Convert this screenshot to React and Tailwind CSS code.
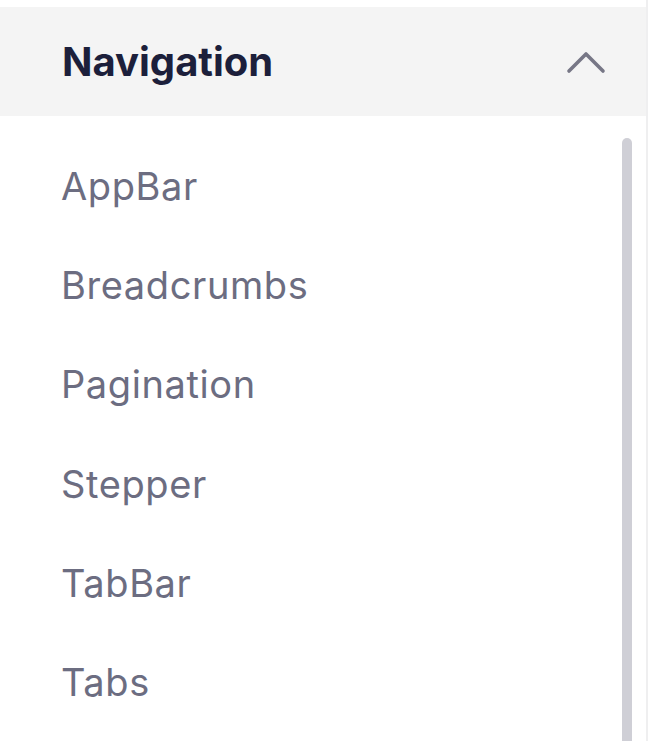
import { useState } from "react";

const items = ["AppBar", "Breadcrumbs", "Pagination", "Stepper", "TabBar", "Tabs"];

function Chevron() {
  return (
    <svg width="40" height="24" viewBox="0 0 40 24" fill="none">
      <path
        d="M3 21L20 4L37 21"
        stroke="#777786"
        strokeWidth="3.6"
        strokeLinecap="round"
        strokeLinejoin="round"
      />
    </svg>
  );
}

export default function App() {
  const [open] = useState(true);

  return (
    <div className="w-[656px] h-[741px] bg-white overflow-hidden font-['Inter',sans-serif]">
      <div className="w-[648px] h-full border-r-2 border-[#efeff0] pt-[7px]">
        <div className="h-[109px] bg-[#f4f4f4] flex items-center justify-between pl-[62px] pr-[40px]">
          <span className="text-[40px] font-bold text-[#1c1f3b]">Navigation</span>
          <Chevron />
        </div>
        {open && (
          <div className="relative pt-[21px]">
            <ul>
              {items.map((item) => (
                <li
                  key={item}
                  className="h-[99.2px] flex items-center pl-[61px] text-[38px] tracking-[0.6px] text-[#6c6d81]"
                >
                  {item}
                </li>
              ))}
            </ul>
            <div className="absolute right-[14px] top-[22px] w-[10px] h-[700px] rounded-full bg-[#cfcfd6]" />
          </div>
        )}
      </div>
    </div>
  );
}
